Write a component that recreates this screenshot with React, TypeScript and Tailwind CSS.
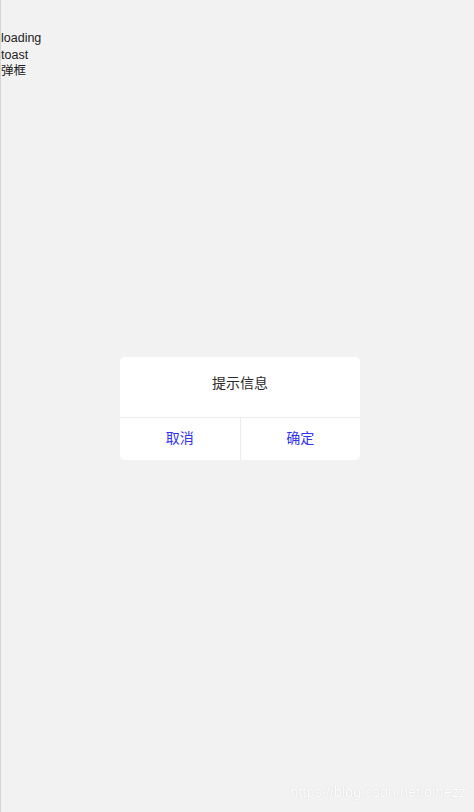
export default function App() {
    return (
        <div className="relative flex h-[812px] w-[474px] flex-col overflow-hidden border-l border-l-[#d6d6d6] bg-[#f2f2f2] font-['Liberation_Sans','Noto_Sans_CJK_SC',sans-serif] text-[#222]">
            <div className="flex flex-col pt-[30px] text-[12.5px] leading-[16.5px]">
                <span>loading</span>
                <span>toast</span>
                <span>弹框</span>
            </div>

            <div className="flex flex-1 items-start justify-center pt-[277px] pl-[5px]">
                <div className="flex w-[240px] flex-col overflow-hidden rounded-[5px] bg-white">
                    <div className="flex h-[61px] items-center justify-center border-b border-b-[#ececec] pb-[6px] text-[14px] text-[#2a2a2a]">
                        提示信息
                    </div>
                    <div className="flex h-[42px] text-[14px] text-[#3232f0]">
                        <button className="flex flex-1 items-center justify-center border-r border-r-[#ececec]">
                            取消
                        </button>
                        <button className="flex flex-1 items-center justify-center">
                            确定
                        </button>
                    </div>
                </div>
            </div>

            <span className="absolute right-[8px] bottom-[8px] text-[14.5px] text-white [text-shadow:0_0_1px_#c8c8c8]">
                https://blog.csdn.net/oihezz
            </span>
        </div>
    );
}
